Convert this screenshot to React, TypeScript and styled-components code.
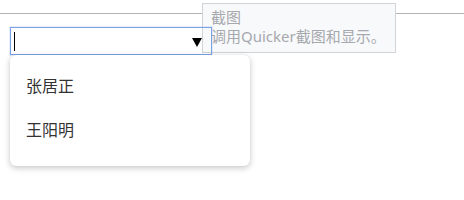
import React from "react";
import styled, { createGlobalStyle } from "styled-components";

const Global = createGlobalStyle`
  html, body { margin: 0; padding: 0; background: #ffffff; }
  body { font-family: "Noto Sans", "Noto Sans CJK SC", sans-serif; }
`;

const Page = styled.div`
  position: relative;
  width: 464px;
  height: 200px;
  padding-top: 13px;
  box-sizing: border-box;
`;

const Rule = styled.div`
  height: 1px;
  background: #b4b4b4;
`;

const Field = styled.div`
  position: relative;
  z-index: 2;
  width: 202px;
  margin: 13px 0 0 10px;
`;

const Combo = styled.div`
  box-sizing: border-box;
  height: 28px;
  display: flex;
  align-items: center;
  padding: 0 9px 0 2px;
  border: 1px solid #7aa3e6;
  box-shadow: 0 0 0 1px rgba(122, 163, 230, 0.18);
  background: transparent;
`;

const Caret = styled.span`
  width: 1px;
  height: 19px;
  background: #000;
  margin-left: 1px;
`;

const Grow = styled.span`
  flex: 1;
`;

const Arrow = styled.svg`
  display: block;
  width: 10px;
  height: 9px;
  margin-top: 2px;
`;

const Menu = styled.div`
  position: absolute;
  top: 28px;
  left: 0;
  width: 240px;
  box-sizing: border-box;
  padding: 8px 0 15px;
  background: #fff;
  border-radius: 6px;
  box-shadow: 0 2px 6px rgba(0, 0, 0, 0.22), 0 0 1px rgba(0, 0, 0, 0.12);
`;

const Item = styled.div`
  height: 44px;
  display: flex;
  align-items: center;
  padding-left: 16px;
  font-size: 16px;
  color: #333;
`;

const Tip = styled.div`
  position: absolute;
  z-index: 1;
  left: 202px;
  top: 3px;
  width: 194px;
  height: 50px;
  box-sizing: border-box;
  padding: 4px 8px;
  background: #f8f9fb;
  border: 1px solid #d2d3d6;
  color: #a6a8ad;
  font-size: 15px;
  line-height: 19px;
  white-space: nowrap;
`;

export default function App() {
  return (
    <Page>
      <Global />
      <Rule />
      <Field>
        <Combo>
          <Caret />
          <Grow />
          <Arrow viewBox="0 0 10 9">
            <polygon points="0,0 10,0 5,9" fill="#000" />
          </Arrow>
        </Combo>
        <Menu>
          <Item>张居正</Item>
          <Item>王阳明</Item>
        </Menu>
      </Field>
      <Tip>
        <div>截图</div>
        <div>调用Quicker截图和显示。</div>
      </Tip>
    </Page>
  );
}
